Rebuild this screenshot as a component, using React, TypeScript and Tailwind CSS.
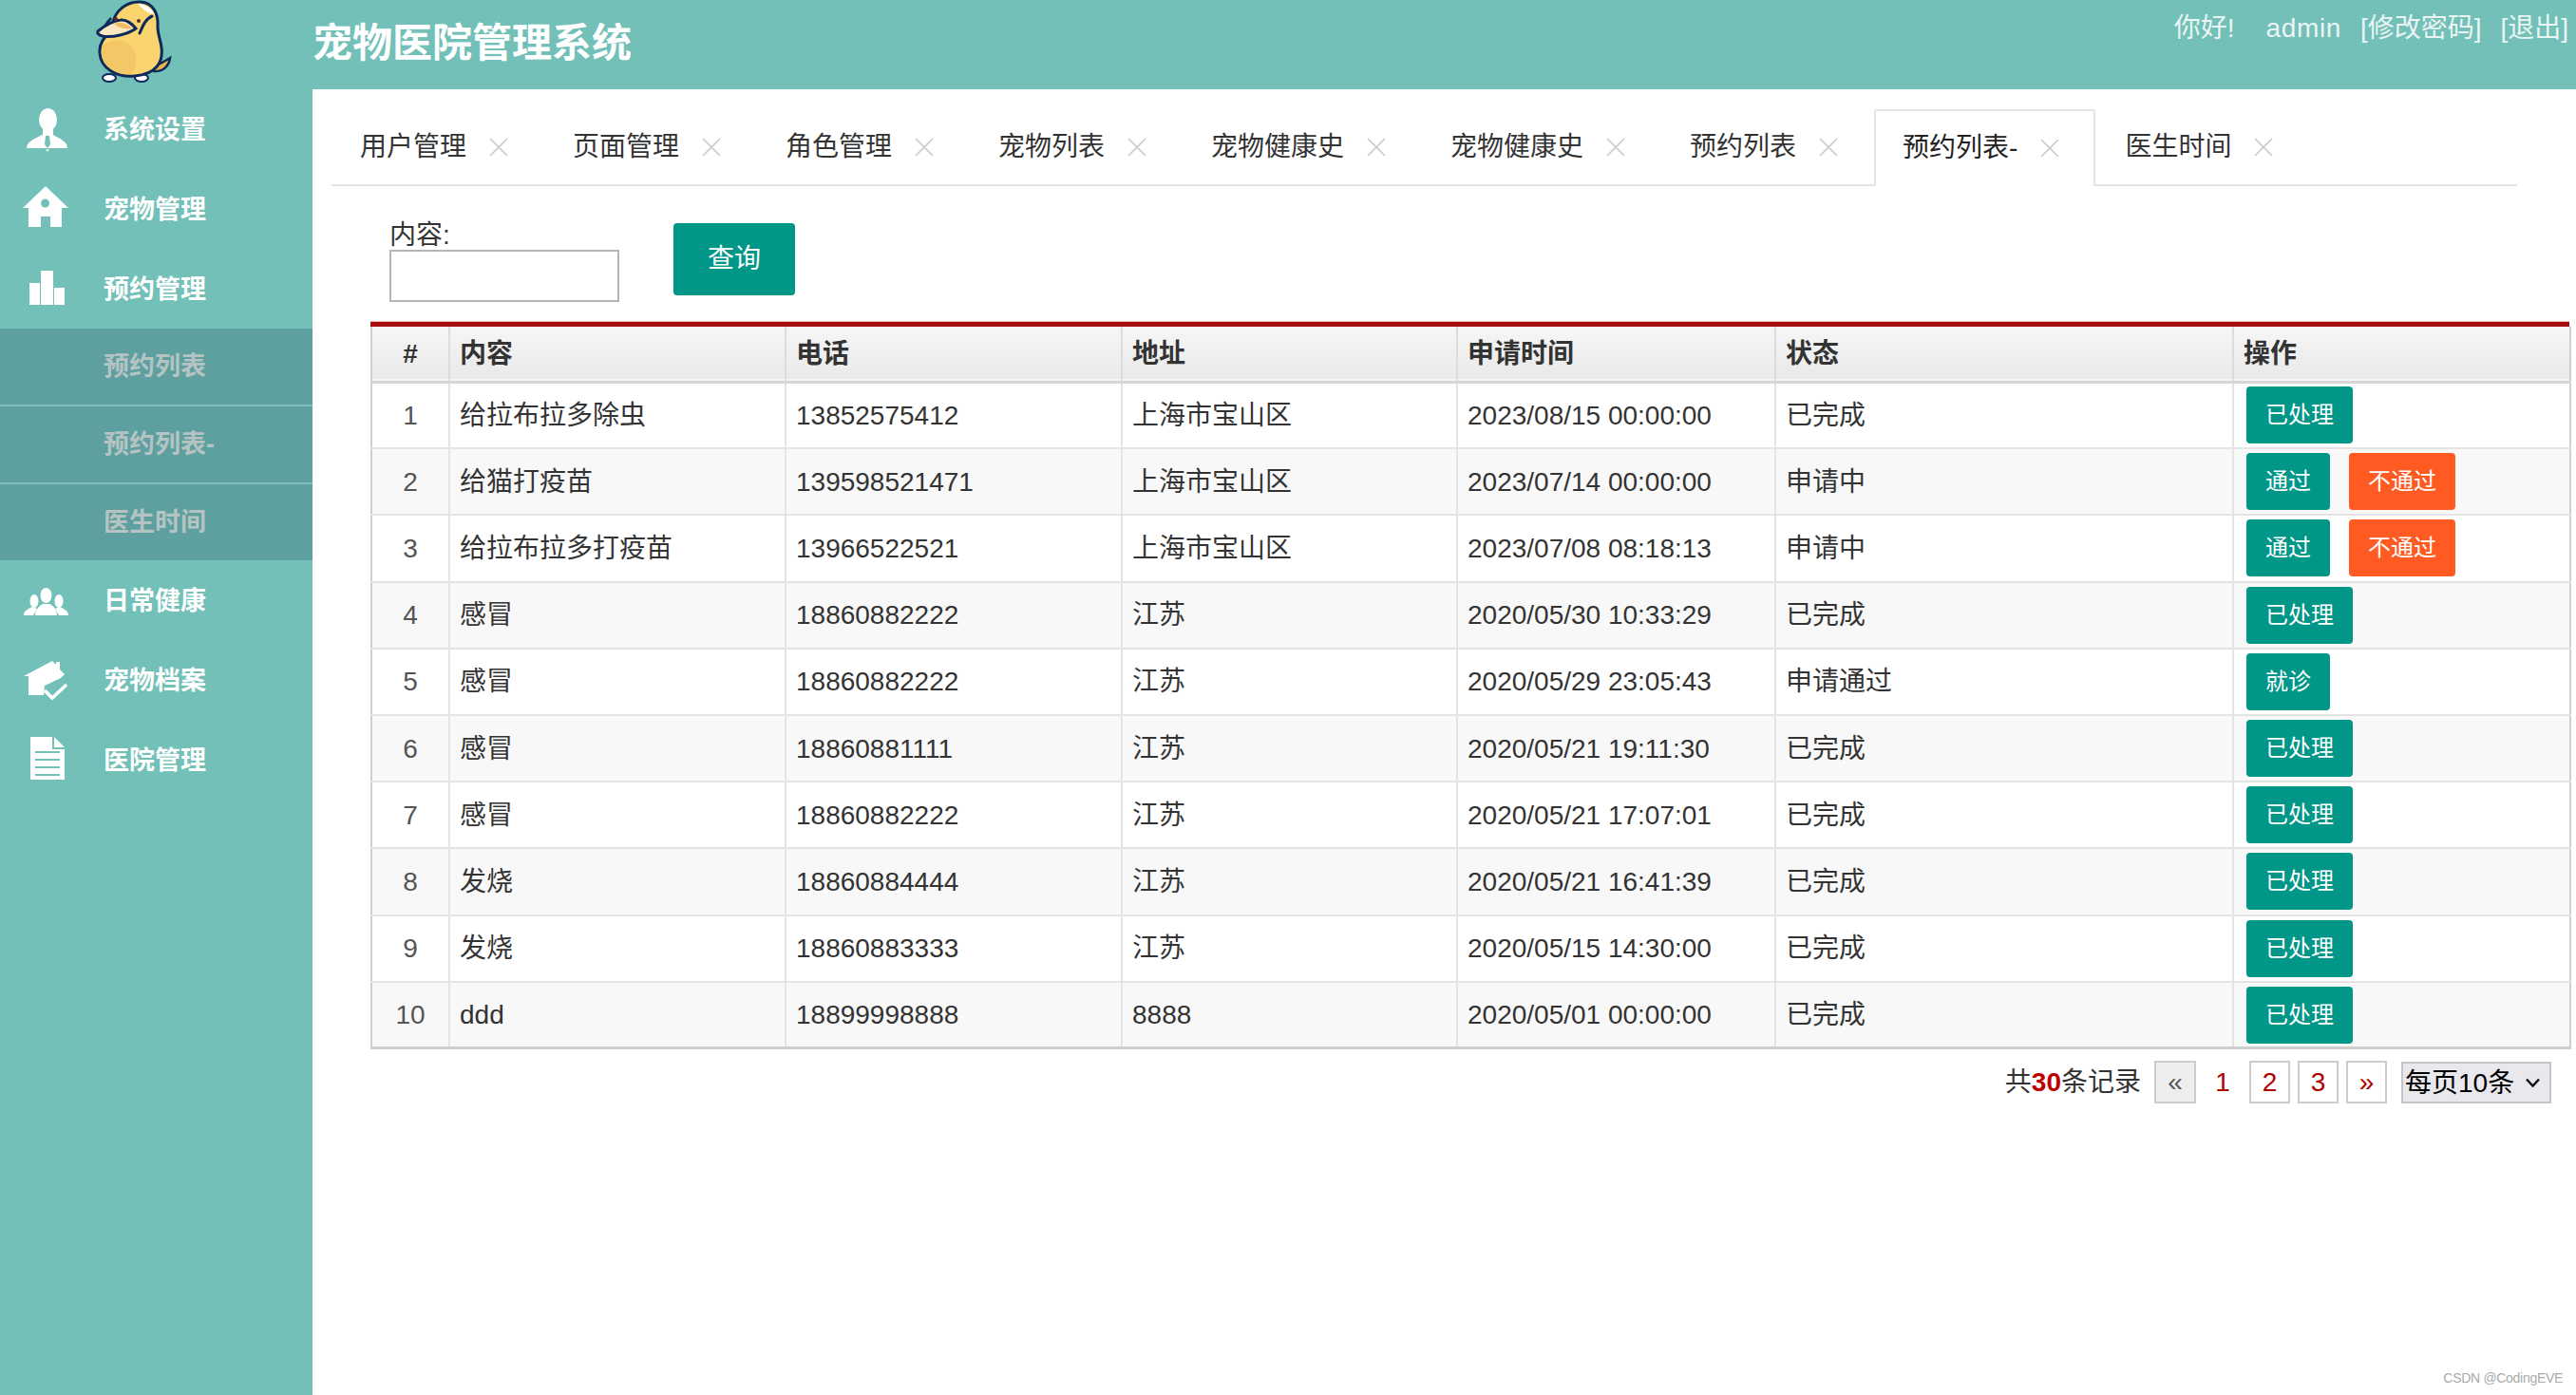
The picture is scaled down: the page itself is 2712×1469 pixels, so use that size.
import type { ReactNode } from 'react';

const TEAL = '#72c0b8';

const tabs = ['用户管理', '页面管理', '角色管理', '宠物列表', '宠物健康史', '宠物健康史', '预约列表', '预约列表-', '医生时间'];

const rows = [
  ['给拉布拉多除虫', '13852575412', '上海市宝山区', '2023/08/15 00:00:00', '已完成', 'done'],
  ['给猫打疫苗', '139598521471', '上海市宝山区', '2023/07/14 00:00:00', '申请中', 'apply'],
  ['给拉布拉多打疫苗', '13966522521', '上海市宝山区', '2023/07/08 08:18:13', '申请中', 'apply'],
  ['感冒', '18860882222', '江苏', '2020/05/30 10:33:29', '已完成', 'done'],
  ['感冒', '18860882222', '江苏', '2020/05/29 23:05:43', '申请通过', 'visit'],
  ['感冒', '18860881111', '江苏', '2020/05/21 19:11:30', '已完成', 'done'],
  ['感冒', '18860882222', '江苏', '2020/05/21 17:07:01', '已完成', 'done'],
  ['发烧', '18860884444', '江苏', '2020/05/21 16:41:39', '已完成', 'done'],
  ['发烧', '18860883333', '江苏', '2020/05/15 14:30:00', '已完成', 'done'],
  ['ddd', '18899998888', '8888', '2020/05/01 00:00:00', '已完成', 'done'],
];

function Duck() {
  return (
    <svg viewBox="0 0 100 92" className="w-[100px] h-[92px]">
      <path d="M71 70 C78 68 84 64 89 61 C88 69 82 76 72 75 Z" fill="#e9b544" stroke="#0e2a5c" strokeWidth="2.5" />
      <ellipse cx="25" cy="82" rx="7" ry="4" fill="#fff" stroke="#0e2a5c" strokeWidth="2" />
      <ellipse cx="59" cy="82" rx="7" ry="4" fill="#fff" stroke="#0e2a5c" strokeWidth="2" />
      <path
        d="M28 28 C30 10 45 1 58 2 C71 3 77 14 76 28 C76 36 79 42 80 50 C82 66 74 78 52 80 C33 82 16 72 15 56 C14 46 20 38 27 34 Z"
        fill="#f9d46f"
        stroke="#0e2a5c"
        strokeWidth="3"
      />
      <path d="M18 48 C30 38 47 42 52 55 C55 64 53 73 48 78 C32 79 19 70 17 56 Z" fill="#f3c766" />
      <path d="M55 4 C62 4 70 9 72 15 C65 14 60 9 55 4 Z" fill="#fff" />
      <path d="M57 35 C60 28 63 20 70 17" fill="none" stroke="#0e2a5c" strokeWidth="3" strokeLinecap="round" />
      <path d="M27 19 C24 22 22 25 20 28" fill="none" stroke="#0e2a5c" strokeWidth="2.5" />
      <path
        d="M13 33 C20 27 30 22 37 21 C43 20 50 26 53 30 C45 36 28 40 18 38 C14 37 12 35 13 33 Z"
        fill="#fbe7c0"
        stroke="#0e2a5c"
        strokeWidth="3"
      />
      <path d="M30 25 C37 22 44 25 50 30 C42 31 36 30 30 25 Z" fill="#f0bd62" />
      <circle cx="32" cy="20" r="2" fill="#5a2a20" />
      <circle cx="56" cy="22" r="2" fill="#5a2a20" />
    </svg>
  );
}

function IconBox({ children }: { children: ReactNode }) {
  return (
    <svg viewBox="0 0 70 76" className="w-[70px] h-[76px] ml-[15px] mr-[24px] shrink-0" fill="#fff">
      {children}
    </svg>
  );
}

const icons: Record<string, ReactNode> = {
  user: (
    <>
      <ellipse cx="35.5" cy="28" rx="9.5" ry="12" />
      <rect x="30" y="36" width="11" height="10" />
      <path d="M13 58 C13 51 22 48 29 44 L41 44 C48 48 56 51 56 58 Z" />
      <path d="M33 45 L37 45 L38 54 L35 58 L32 54 Z" fill={TEAL} />
      <circle cx="35" cy="60" r="1.6" fill="#cdeee9" />
    </>
  ),
  house: (
    <>
      <path d="M33 14 L57 37 L50 37 L50 57 L38 57 L38 46 L28 46 L28 57 L15 57 L15 37 L9 37 Z" />
      <circle cx="32.5" cy="32" r="4.5" fill={TEAL} />
    </>
  ),
  bars: (
    <>
      <rect x="16" y="32" width="11" height="23" />
      <rect x="28" y="19" width="13" height="36" />
      <rect x="42" y="37" width="11" height="18" />
    </>
  ),
  group: (
    <>
      <ellipse cx="21" cy="39" rx="4.5" ry="7" />
      <ellipse cx="47" cy="39" rx="4.5" ry="7" />
      <path d="M10 54 C10 49 15 47 19 45 L24 47 L20 54 Z" />
      <path d="M57 54 C57 49 52 47 48 45 L43 47 L47 54 Z" />
      <ellipse cx="33.5" cy="33" rx="6" ry="8" />
      <path d="M22 54 C22 47 27 44 30 42 L37 42 C41 44 45 47 45 54 Z" />
    </>
  ),
  check: (
    <>
      <path d="M40 18 L44 22 L44 19 L48 19 L48 27 L53 32 L49 36 L32 44 L31 54 L15 54 L15 34 L10 34 Z" />
      <path d="M32 49 L40 57 L55 43" fill="none" stroke="#fff" strokeWidth="3.5" />
    </>
  ),
  doc: (
    <>
      <path d="M17 14 L40 14 L40 27 L53 27 L53 59 L17 59 Z" />
      <path d="M42 14 L53 25 L42 25 Z" />
      <path d="M22 30 H48 M22 38 H48 M22 46 H48 M22 54 H48" stroke={TEAL} strokeWidth="2" />
    </>
  ),
};

function MenuItem({ icon, label }: { icon: string; label: string }) {
  return (
    <div className="h-[84px] flex items-center text-white font-bold text-[27px]">
      <IconBox>{icons[icon]}</IconBox>
      <span className="pt-[2px]">{label}</span>
    </div>
  );
}

function SubItem({ label, last }: { label: string; last?: boolean }) {
  return (
    <div
      className={
        last
          ? 'h-[80px] flex items-center pl-[109px] font-bold text-[27px] text-[#b5c4c3]'
          : 'h-[82px] flex items-center pl-[109px] font-bold text-[27px] text-[#b5c4c3] border-b-2 border-[#7cbdb8]'
      }
    >
      {label}
    </div>
  );
}

function Sidebar() {
  return (
    <aside className="w-[329px] shrink-0 bg-[#72c0b8]">
      <MenuItem icon="user" label="系统设置" />
      <MenuItem icon="house" label="宠物管理" />
      <MenuItem icon="bars" label="预约管理" />
      <div className="bg-[#5e9f9f]">
        <SubItem label="预约列表" />
        <SubItem label="预约列表-" />
        <SubItem label="医生时间" last />
      </div>
      <MenuItem icon="group" label="日常健康" />
      <MenuItem icon="check" label="宠物档案" />
      <MenuItem icon="doc" label="医院管理" />
    </aside>
  );
}

function CloseMark() {
  return (
    <svg viewBox="0 0 20 18" className="w-[20px] h-[18px] ml-[24px]" fill="none" stroke="#c8c8c8" strokeWidth="1.6">
      <path d="M1 0 L19 18 M19 0 L1 18" />
    </svg>
  );
}

function Tabs() {
  return (
    <div className="ml-[20px] mr-[62px] mt-[21px] h-[81px] flex border-b-2 border-[#e4e4e4]">
      {tabs.map((tab, index) =>
        index === 7 ? (
          <div
            key={index}
            className="h-[81px] pl-[28px] pr-[36px] mr-[1px] pb-[2px] flex items-center bg-white border-2 border-b-0 border-[#e4e4e4] rounded-t-[3px] text-[#222]"
          >
            {tab}
            <CloseMark />
          </div>
        ) : (
          <div key={index} className="h-[79px] pl-[30px] pr-[38px] flex items-center">
            {tab}
            <CloseMark />
          </div>
        )
      )}
    </div>
  );
}

function Action({ label, orange, wide }: { label: string; orange?: boolean; wide?: boolean }) {
  const color = orange ? 'bg-[#ff5a22]' : 'bg-[#009688]';
  const width = orange ? 'w-[112px]' : wide ? 'w-[112px]' : 'w-[88px]';
  return (
    <button className={`${color} ${width} h-[60px] rounded-[4px] text-white text-[24px]`}>{label}</button>
  );
}

function Actions({ kind }: { kind: string }) {
  if (kind === 'done') return <Action label="已处理" wide />;
  if (kind === 'visit') return <Action label="就诊" />;
  return (
    <div className="flex gap-[20px]">
      <Action label="通过" />
      <Action label="不通过" orange />
    </div>
  );
}

function DataTable() {
  const th = 'text-left font-bold pl-[10px] pt-[2px] border-l-2 border-[#dcdcdc]';
  const td = 'pl-[10px] pt-[1px] border-l-2 border-[#e4e4e4]';
  return (
    <div className="ml-[61px] mt-[21px] w-[2315px] border-t-[5px] border-[#a80c10] shadow-[0_-1px_0_#e8b4b4]">
      <table className="w-full table-fixed border-collapse border-x-2 border-b-[3px] border-[#cfcfcf]">
        <colgroup>
          <col className="w-[82px]" />
          <col className="w-[354px]" />
          <col className="w-[354px]" />
          <col className="w-[353px]" />
          <col className="w-[335px]" />
          <col className="w-[482px]" />
          <col className="w-[355px]" />
        </colgroup>
        <thead>
          <tr className="h-[58px] bg-gradient-to-b from-[#f6f6f6] to-[#e9e9e9] border-b-[3px] border-[#d6d6d6]">
            <th className="font-bold text-center pt-[2px]">#</th>
            <th className={th}>内容</th>
            <th className={th}>电话</th>
            <th className={th}>地址</th>
            <th className={th}>申请时间</th>
            <th className={th}>状态</th>
            <th className={th}>操作</th>
          </tr>
        </thead>
        <tbody>
          {rows.map((row, index) => (
            <tr
              key={index}
              className={
                index % 2 === 0
                  ? 'h-[70.2px] bg-white border-b-2 border-[#e4e4e4]'
                  : 'h-[70.2px] bg-[#f8f8f8] border-b-2 border-[#e4e4e4]'
              }
            >
              <td className="text-center pt-[1px] text-[#555]">{index + 1}</td>
              <td className={td}>{row[0]}</td>
              <td className={td}>{row[1]}</td>
              <td className={td}>{row[2]}</td>
              <td className={td}>{row[3]}</td>
              <td className={td}>{row[4]}</td>
              <td className="pl-[13px] border-l-2 border-[#e4e4e4]">
                <Actions kind={row[5]} />
              </td>
            </tr>
          ))}
        </tbody>
      </table>
    </div>
  );
}

function Pager() {
  const box = 'w-[43px] h-[45px] flex items-center justify-center border-2 border-[#cccccc] text-[#b00000]';
  return (
    <div className="mt-[12px] pr-[26px] flex justify-end items-center gap-[8px]">
      <span className="mr-[6px]">
        共<b className="text-[#c00000]">30</b>条记录
      </span>
      <span className="w-[44px] h-[45px] flex items-center justify-center border-2 border-[#cccccc] bg-[#eeeeee] text-[#555]">«</span>
      <span className="w-[40px] h-[45px] flex items-center justify-center text-[#b00000]">1</span>
      <span className={box}>2</span>
      <span className={box}>3</span>
      <span className={box}>»</span>
      <div className="relative ml-[7px]">
        <select className="block appearance-none pl-[2px] w-[158px] h-[44px] bg-[#e9e9ed] border-2 border-[#c6c6c6] text-black text-[28px]">
          <option>每页10条</option>
        </select>
        <svg viewBox="0 0 15 10" className="absolute right-[12px] top-[17px] w-[15px] h-[10px]" fill="none" stroke="#111" strokeWidth="2.5">
          <path d="M1 1.5 L7.5 8.5 L14 1.5" />
        </svg>
      </div>
    </div>
  );
}

export default function App() {
  return (
    <div className="relative h-[1469px] bg-white text-[28px] text-[#333] overflow-hidden font-['Liberation_Sans','Noto_Sans_CJK_SC',sans-serif]">
      <header className="h-[94px] bg-[#72c0b8] flex items-start">
        <div className="w-[329px] pl-[90px] shrink-0">
          <Duck />
        </div>
        <h1 className="mt-[21px] text-[42px] leading-[50px] font-bold text-white">宠物医院管理系统</h1>
        <div className="ml-auto mr-[8px] mt-[14px] flex gap-[20px] text-[28px] leading-[32px] text-[#eaf5f3]">
          <span className="mr-[13px]">你好!</span>
          <span className="tracking-[0.6px]">admin</span>
          <span>[修改密码]</span>
          <span>[退出]</span>
        </div>
      </header>
      <div className="flex h-[1375px]">
        <Sidebar />
        <main className="flex-1">
          <Tabs />
          <form className="ml-[81px] pt-[37px] flex items-start">
            <label className="w-[242px] block leading-[30px]">
              内容:
              <input className="block w-[242px] h-[55px] border-2 border-[#b5b5b5]" />
            </label>
            <button type="button" className="ml-[57px] mt-[2px] w-[128px] h-[76px] rounded-[4px] bg-[#009688] text-white">
              查询
            </button>
          </form>
          <DataTable />
          <Pager />
        </main>
      </div>
      <span className="absolute right-[14px] top-[1441px] whitespace-nowrap text-[14px] tracking-[-0.3px] text-[#aaaaaa]">CSDN @CodingEVE</span>
    </div>
  );
}
